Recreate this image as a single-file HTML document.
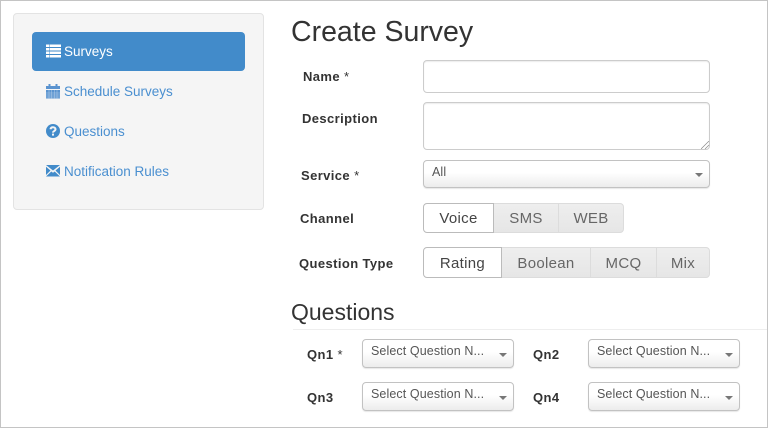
<!DOCTYPE html>
<html><head><meta charset="utf-8">
<style>
html,body{margin:0;padding:0;background:#fff}
#p{position:relative;width:768px;height:428px;overflow:hidden;font-family:"Liberation Sans",sans-serif;background:#fff}
#c{position:absolute;left:0;top:0;width:768px;height:428px;filter:blur(.35px)}
#p *{box-sizing:border-box}
.a{position:absolute;white-space:nowrap}
.lab{font-weight:700;font-size:13px;color:#333;line-height:16px;letter-spacing:.4px}
.nav{font-size:13.5px;color:#4a8fd0;line-height:16px;left:64px}
.in{position:absolute;background:#fff;border:1px solid #ccc;border-radius:4px;box-shadow:inset 0 1px 1px rgba(0,0,0,.075)}
.sel{position:absolute;border:1px solid #c2c2c2;border-radius:4px;background:linear-gradient(#fff 0,#fff 45%,#ececec 100%);box-shadow:0 1px 1px rgba(0,0,0,.1);font-size:12.5px;color:#555;line-height:14px;padding:3px 0 0 8px;white-space:nowrap;letter-spacing:.1px}
.sel i{position:absolute;right:6px;top:50%;margin-top:-1px;border:4px solid transparent;border-top:4px solid #777;border-bottom:0}
.b{position:absolute;background:linear-gradient(#eee,#e6e6e6);border:1px solid #dcdcdc;color:#666;font-size:15px;text-align:center;letter-spacing:.3px}
.on{background:#fff;border:1px solid #bbb;color:#444;z-index:2}
</style></head><body>
<div id="p">
<div id="c">
<div class="a" style="left:13px;top:13px;width:251px;height:197px;background:#f5f5f5;border:1px solid #e3e3e3;border-radius:4px"></div>
<div class="a" style="left:32px;top:32px;width:213px;height:39px;background:#428bca;border-radius:4px"></div>
<svg class="a" style="left:46px;top:44px" width="15" height="15" viewBox="0 0 15 15"><path fill="#fff" d="M0 .5h3v2.500H0zM3.500 .5H15v2.500H3.500zM0 4h3v2.500H0zM3.500 4H15v2.500H3.500zM0 7.500h3v2.500H0zM3.500 7.500H15v2.500H3.500zM0 11h3v2.500H0zM3.500 11H15v2.500H3.500z"/></svg>
<div class="a nav" style="top:44px;color:#fff">Surveys</div>
<svg class="a" style="left:46px;top:84px" width="14" height="15" viewBox="0 0 14 15"><path fill="#5a93cf" d="M0 2h2.500V0h2v2h5V0h2v2H14v3H0zM0 6h14v8.500H0z"/><path stroke="#c9dcef" stroke-width=".4" d="M0 9h14M0 11h14M0 13h14M3 6v9M5.700 6v9M8.400 6v9M11 6v9"/></svg>
<div class="a nav" style="top:84px">Schedule Surveys</div>
<svg class="a" style="left:46px;top:124px" width="14" height="14" viewBox="0 0 14 14"><circle cx="7" cy="7" r="7" fill="#428bca"/><path fill="none" stroke="#f5f5f5" stroke-width="2" d="M4.500 5.300C4.700 3.800 5.800 3.300 7 3.300c1.400 0 2.500.8 2.500 2 0 1.800-2.500 1.700-2.500 3.300"/><rect x="6" y="9.600" width="2" height="2" fill="#f5f5f5"/></svg>
<div class="a nav" style="top:124px">Questions</div>
<svg class="a" style="left:46px;top:165px" width="14" height="12" viewBox="0 0 14 12"><path fill="#428bca" d="M0 0h14L7 5.500zM0 1.800V10l4.500-4.500zM14 1.800V10L9.500 5.500zM0 11.500h14L8.700 6.500 7 7.800 5.300 6.500z"/></svg>
<div class="a nav" style="top:164px">Notification Rules</div>

<div class="a" style="left:291px;top:15px;font-size:28.500px;line-height:34px;color:#333">Create Survey</div>
<div class="a lab" style="left:303px;top:69px">Name <span style="font-weight:400">*</span></div>
<div class="in" style="left:423px;top:60px;width:287px;height:33px"></div>
<div class="a lab" style="left:302px;top:111px">Description</div>
<div class="in" style="left:423px;top:102px;width:287px;height:48px"></div>
<svg class="a" style="left:701px;top:141px" width="8" height="8" viewBox="0 0 8 8"><path stroke="#888" stroke-width=".7" d="M0 8L8 0M4 8L8 4"/></svg>
<div class="a lab" style="left:301px;top:168px">Service <span style="font-weight:400">*</span></div>
<div class="sel" style="left:423px;top:160px;width:287px;height:28px;padding-top:4px">All<i></i></div>

<div class="a lab" style="left:300px;top:211px">Channel</div>
<div class="b on" style="left:423px;top:203px;width:71px;height:30px;line-height:29px;border-radius:4px 0 0 4px">Voice</div>
<div class="b" style="left:493px;top:203px;width:66px;height:30px;line-height:29px">SMS</div>
<div class="b" style="left:558px;top:203px;width:66px;height:30px;line-height:29px;border-radius:0 4px 4px 0">WEB</div>

<div class="a lab" style="left:299px;top:256px">Question Type</div>
<div class="b on" style="left:423px;top:247px;width:79px;height:31px;line-height:31px;border-radius:4px 0 0 4px">Rating</div>
<div class="b" style="left:501px;top:247px;width:90px;height:31px;line-height:31px">Boolean</div>
<div class="b" style="left:590px;top:247px;width:67px;height:31px;line-height:31px">MCQ</div>
<div class="b" style="left:656px;top:247px;width:54px;height:31px;line-height:31px;border-radius:0 4px 4px 0">Mix</div>

<div class="a" style="left:291px;top:298px;font-size:23px;line-height:28px;color:#333">Questions</div>
<div class="a" style="left:293px;top:329px;width:475px;height:1px;background:#eee"></div>

<div class="a lab" style="left:307px;top:347px">Qn1 <span style="font-weight:400">*</span></div>
<div class="sel" style="left:362px;top:339px;width:152px;height:29px;padding-top:4px">Select Question N...<i></i></div>
<div class="a lab" style="left:533px;top:347px">Qn2</div>
<div class="sel" style="left:588px;top:339px;width:152px;height:29px;padding-top:4px">Select Question N...<i></i></div>
<div class="a lab" style="left:307px;top:390px">Qn3</div>
<div class="sel" style="left:362px;top:382px;width:152px;height:29px;padding-top:4px">Select Question N...<i></i></div>
<div class="a lab" style="left:533px;top:390px">Qn4</div>
<div class="sel" style="left:588px;top:382px;width:152px;height:29px;padding-top:4px">Select Question N...<i></i></div>
</div>
<div class="a" style="left:0;top:0;width:768px;height:428px;border:1px solid #c4c4c4;z-index:9"></div>
</div>
</body></html>
